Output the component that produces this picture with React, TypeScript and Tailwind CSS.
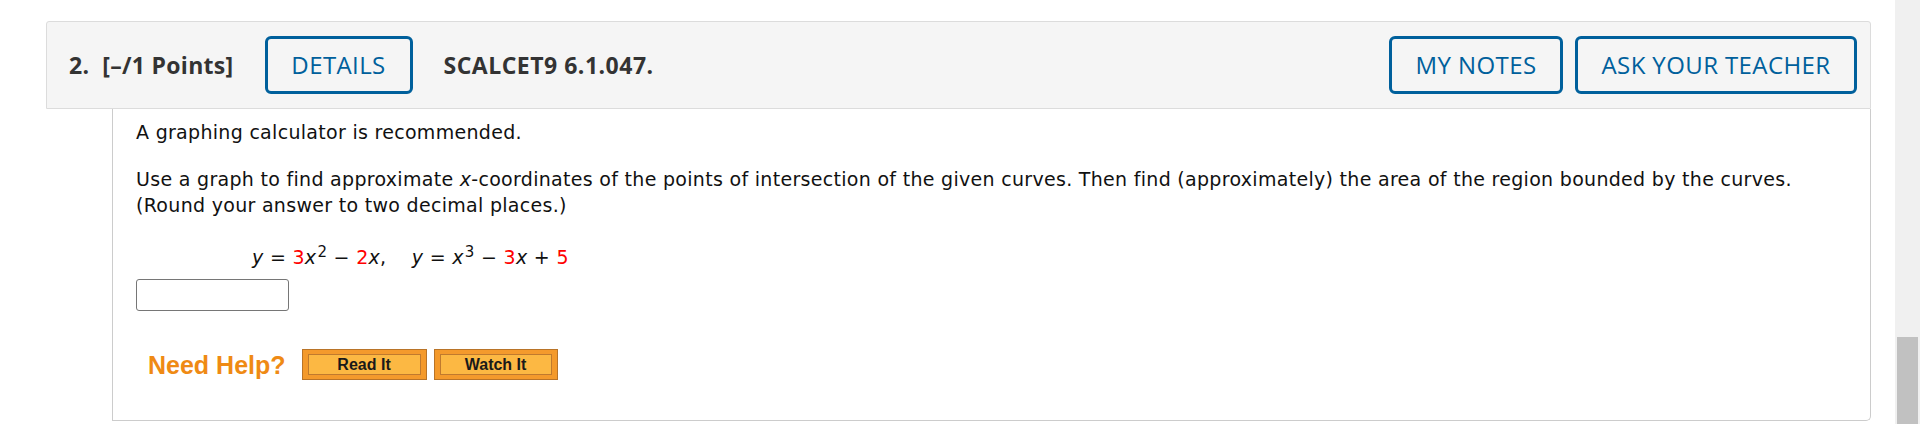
import React from 'react';

const headFont = { fontFamily: '"Open Sans", "Liberation Sans", sans-serif' };

function OutlineButton({ label, className }: { label: string; className: string }) {
    return (
        <button
            type="button"
            className={`h-[58px] rounded-[6px] border-[3px] border-[#00609c] bg-transparent text-[24px] tracking-[0.4px] text-[#00609c] ${className}`}
        >
            {label}
        </button>
    );
}

function HelpButton({ label, width }: { label: string; width: string }) {
    return (
        <div className={`h-[31px] ${width} border border-[#b97428] bg-[#f49a2c] p-[4px_5px]`}>
            <div className="flex h-full items-center justify-center border border-[#c07a2e] bg-[#fcb843] font-['Liberation_Sans',Arial,sans-serif] text-[16px] font-bold text-[#1a1a1a]">
                {label}
            </div>
        </div>
    );
}

export default function App() {
    return (
        <div className="flex h-[424px] w-[1920px] overflow-hidden bg-white">
            <div className="flex-1 pl-[46px] pr-[24px] pt-[21px]">
                {/* Question header */}
                <div
                    className="flex h-[88px] items-center rounded-t-[3px] border border-[#dcdcdc] bg-[#f5f5f5] pl-[22px] pr-[13px] text-[#333]"
                    style={headFont}
                >
                    <span className="text-[23px] font-bold tracking-[0.3px]">2.</span>
                    <span className="ml-[13px] text-[23px] font-bold tracking-[0.3px]">[–/1 Points]</span>
                    <OutlineButton label="DETAILS" className="ml-[31px] w-[148px]" />
                    <span className="ml-[31px] text-[23px] font-bold tracking-[0.5px]">SCALCET9 6.1.047.</span>
                    <div className="ml-auto flex gap-[12px]">
                        <OutlineButton label="MY NOTES" className="w-[174px]" />
                        <OutlineButton label="ASK YOUR TEACHER" className="w-[282px]" />
                    </div>
                </div>

                {/* Question body */}
                <div className="ml-[66px] h-[312px] rounded-br-[5px] border-x border-b border-[#cccccc] pl-[23px] pt-[10px] font-['DejaVu_Sans',Verdana,sans-serif] text-[19px] leading-[26px] tracking-[0.3px] text-[#111]">
                    <p>A graphing calculator is recommended.</p>
                    <p className="mt-[21px]">
                        Use a graph to find approximate <i>x</i>-coordinates of the points of intersection of the given curves. Then find (approximately) the area of the region bounded by the curves.
                        <br />
                        (Round your answer to two decimal places.)
                    </p>
                    <p className="mt-[26px] pl-[116px]">
                        <i>y</i> = <span className="text-[#ff0000]">3</span><i>x</i>
                        <sup className="ml-[1px] text-[15px]">2</sup> − <span className="text-[#ff0000]">2</span><i>x</i>,
                        {'\u00a0\u00a0\u00a0\u00a0'}<i>y</i> = <i>x</i>
                        <sup className="ml-[1px] text-[15px]">3</sup> − <span className="text-[#ff0000]">3</span><i>x</i> +{' '}
                        <span className="text-[#ff0000]">5</span>
                    </p>
                    <input
                        type="text"
                        className="mt-[9px] block h-[32px] w-[153px] rounded-[3px] border border-[#767676] bg-white"
                    />
                    <div className="mt-[38px] flex items-center pl-[12px]">
                        <span className="font-['Liberation_Sans',Arial,sans-serif] text-[25px] font-bold tracking-normal text-[#ef8a14]">
                            Need Help?
                        </span>
                        <div className="ml-[16px] flex gap-[7px] tracking-normal">
                            <HelpButton label="Read It" width="w-[125px]" />
                            <HelpButton label="Watch It" width="w-[124px]" />
                        </div>
                    </div>
                </div>
            </div>

            {/* Window scrollbar */}
            <div className="flex w-[25px] flex-col justify-end bg-[#f0f0f0] px-[2px]">
                <div className="h-[87px] bg-[#c1c1c1]" />
            </div>
        </div>
    );
}
